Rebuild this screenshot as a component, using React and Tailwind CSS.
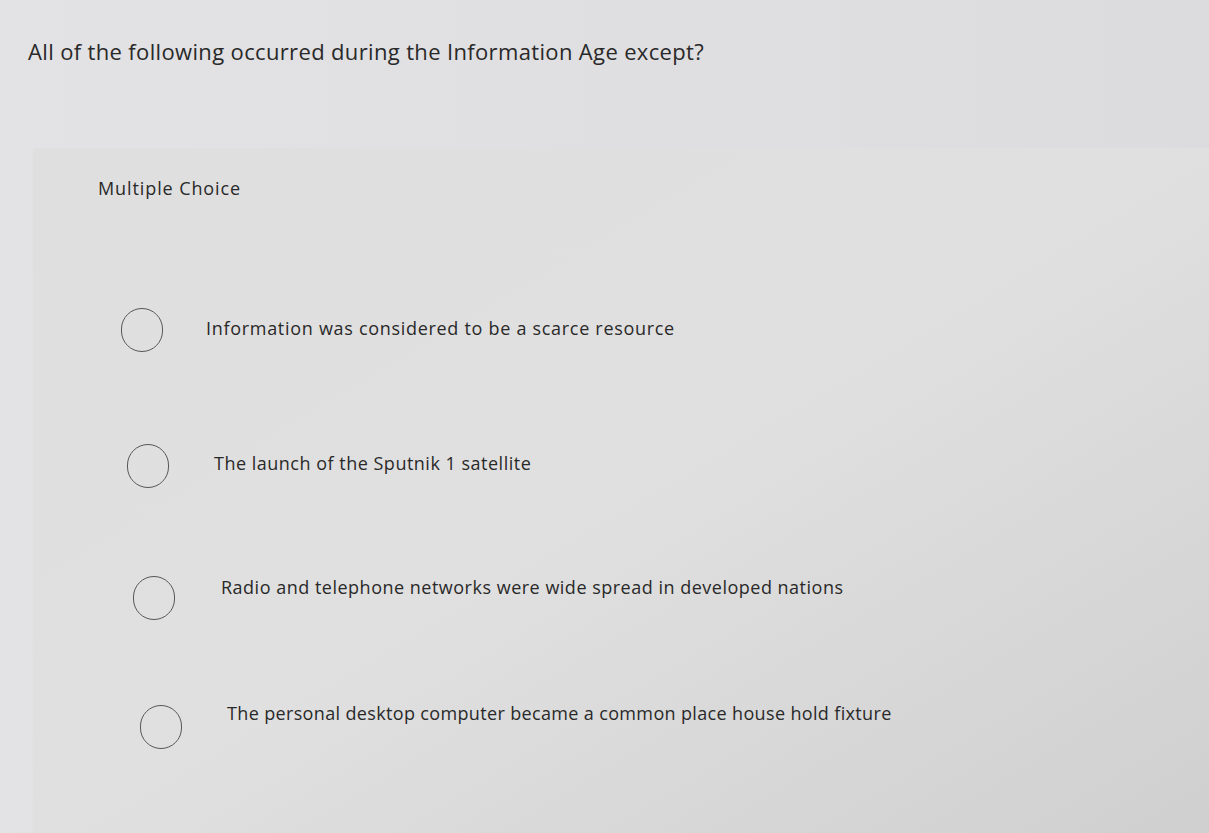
const options = [
  { text: "Information was considered to be a scarce resource", row: "ml-[88px] gap-[43px]", label: "-mt-[5px] tracking-[0.7px]" },
  { text: "The launch of the Sputnik 1 satellite", row: "ml-[94px] gap-[45px] mt-[92px]", label: "-mt-[6px] tracking-[0.5px]" },
  { text: "Radio and telephone networks were wide spread in developed nations", row: "ml-[100px] gap-[46px] mt-[88px]", label: "-mt-[23px] tracking-[0.5px]" },
  { text: "The personal desktop computer became a common place house hold fixture", row: "ml-[107px] gap-[45px] mt-[85px]", label: "-mt-[29px] tracking-[0.35px]" },
];

function Radio() {
  return <span className="block w-[42px] h-[44px] shrink-0 rounded-full border-[1.7px] border-[#585858]" />;
}

export default function App() {
  return (
    <div
      className="w-[1209px] h-[833px] overflow-hidden bg-gradient-to-r from-[#e3e2e4] to-[#dcdbdd] text-[#292929]"
      style={{ fontFamily: "'Open Sans', Lato, sans-serif" }}
    >
      <h1 className="pl-[28px] pt-[37px] text-[22px] leading-[28px] tracking-[0.35px]">
        All of the following occurred during the Information Age except?
      </h1>

      <div className="mt-[83px] ml-[33px] h-[700px] bg-gradient-to-br from-[#dfdfe0] via-[#e0e0e0] to-[#cfcfcf] pt-[28px]">
        <div className="pl-[65px] text-[18px] leading-[24px] tracking-[0.9px]">Multiple Choice</div>

        <div className="mt-[108px] flex flex-col">
          {options.map((o) => (
            <div key={o.text} className={`flex items-center ${o.row}`}>
              <Radio />
              <span className={`text-[18px] leading-[24px] ${o.label}`}>{o.text}</span>
            </div>
          ))}
        </div>
      </div>
    </div>
  );
}
